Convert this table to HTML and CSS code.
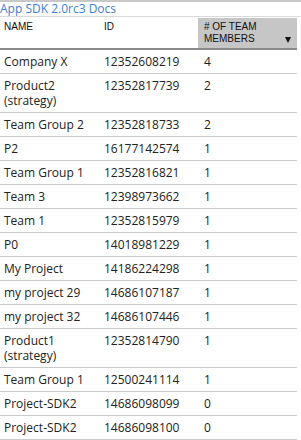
FILE: index.html
```html
<!DOCTYPE html>
<html>
<head>
<meta charset="utf-8">
<link rel="stylesheet" href="styles.css">
</head>
<body>
<div class="title">App SDK 2.0rc3 Docs</div>
<div class="grid">
  <div class="head">
    <div class="hcell">NAME</div>
    <div class="hcell">ID</div>
    <div class="hcell sorted"><span># OF TEAM<br>MEMBERS</span><span class="arrow"></span></div>
  </div>
  <div class="row"><div class="c1">Company X</div><div class="c2">12352608219</div><div class="c3">4</div></div>
  <div class="row"><div class="c1">Product2<br>(strategy)</div><div class="c2">12352817739</div><div class="c3">2</div></div>
  <div class="row"><div class="c1">Team Group 2</div><div class="c2">12352818733</div><div class="c3">2</div></div>
  <div class="row"><div class="c1">P2</div><div class="c2">16177142574</div><div class="c3">1</div></div>
  <div class="row"><div class="c1">Team Group 1</div><div class="c2">12352816821</div><div class="c3">1</div></div>
  <div class="row"><div class="c1">Team 3</div><div class="c2">12398973662</div><div class="c3">1</div></div>
  <div class="row"><div class="c1">Team 1</div><div class="c2">12352815979</div><div class="c3">1</div></div>
  <div class="row"><div class="c1">P0</div><div class="c2">14018981229</div><div class="c3">1</div></div>
  <div class="row"><div class="c1">My Project</div><div class="c2">14186224298</div><div class="c3">1</div></div>
  <div class="row"><div class="c1">my project 29</div><div class="c2">14686107187</div><div class="c3">1</div></div>
  <div class="row"><div class="c1">my project 32</div><div class="c2">14686107446</div><div class="c3">1</div></div>
  <div class="row"><div class="c1">Product1<br>(strategy)</div><div class="c2">12352814790</div><div class="c3">1</div></div>
  <div class="row"><div class="c1">Team Group 1</div><div class="c2">12500241114</div><div class="c3">1</div></div>
  <div class="row"><div class="c1">Project-SDK2</div><div class="c2">14686098099</div><div class="c3">0</div></div>
  <div class="row"><div class="c1">Project-SDK2</div><div class="c2">14686098100</div><div class="c3">0</div></div>
</div>
</body>
</html>
```
FILE: styles.css
```css
html, body {
  margin: 0;
  padding: 0;
  background: #fff;
  overflow: hidden;
}
body {
  width: 301px;
  height: 440px;
}
.title {
  border-top: 2px solid #c8c8c8;
  border-bottom: 1px solid #d9d9d9;
  font-family: "Open Sans", sans-serif;
  font-size: 12px;
  line-height: 14px;
  color: #3d7fd6;
  white-space: nowrap;
}
.grid {
  width: 297px;
}
.head {
  display: grid;
  grid-template-columns: 100px 98px 99px;
  padding-top: 1px;
  border-bottom: 2px solid #8a8a8a;
  font-family: "Liberation Sans", Arial, sans-serif;
  font-size: 10px;
  line-height: 12px;
  color: #111;
}
.hcell {
  height: 24px;
  padding: 3px 0 3px 4px;
}
.hcell.sorted {
  background: #c6c6c6;
  padding-left: 6px;
  padding-right: 6px;
  display: flex;
  justify-content: space-between;
  align-items: flex-end;
}
.arrow {
  width: 0;
  height: 0;
  border-left: 3.5px solid transparent;
  border-right: 3.5px solid transparent;
  border-top: 6px solid #111;
  margin-bottom: 2px;
}
.row {
  display: grid;
  grid-template-columns: 100px 98px 99px;
  border-bottom: 1px solid #cacaca;
  font-family: "Open Sans", sans-serif;
  font-size: 12px;
  line-height: 15px;
  color: #222;
}
.row > div {
  padding: 4px 0 4px 4px;
  white-space: nowrap;
}
.row > .c3 {
  padding-left: 6px;
}
```
